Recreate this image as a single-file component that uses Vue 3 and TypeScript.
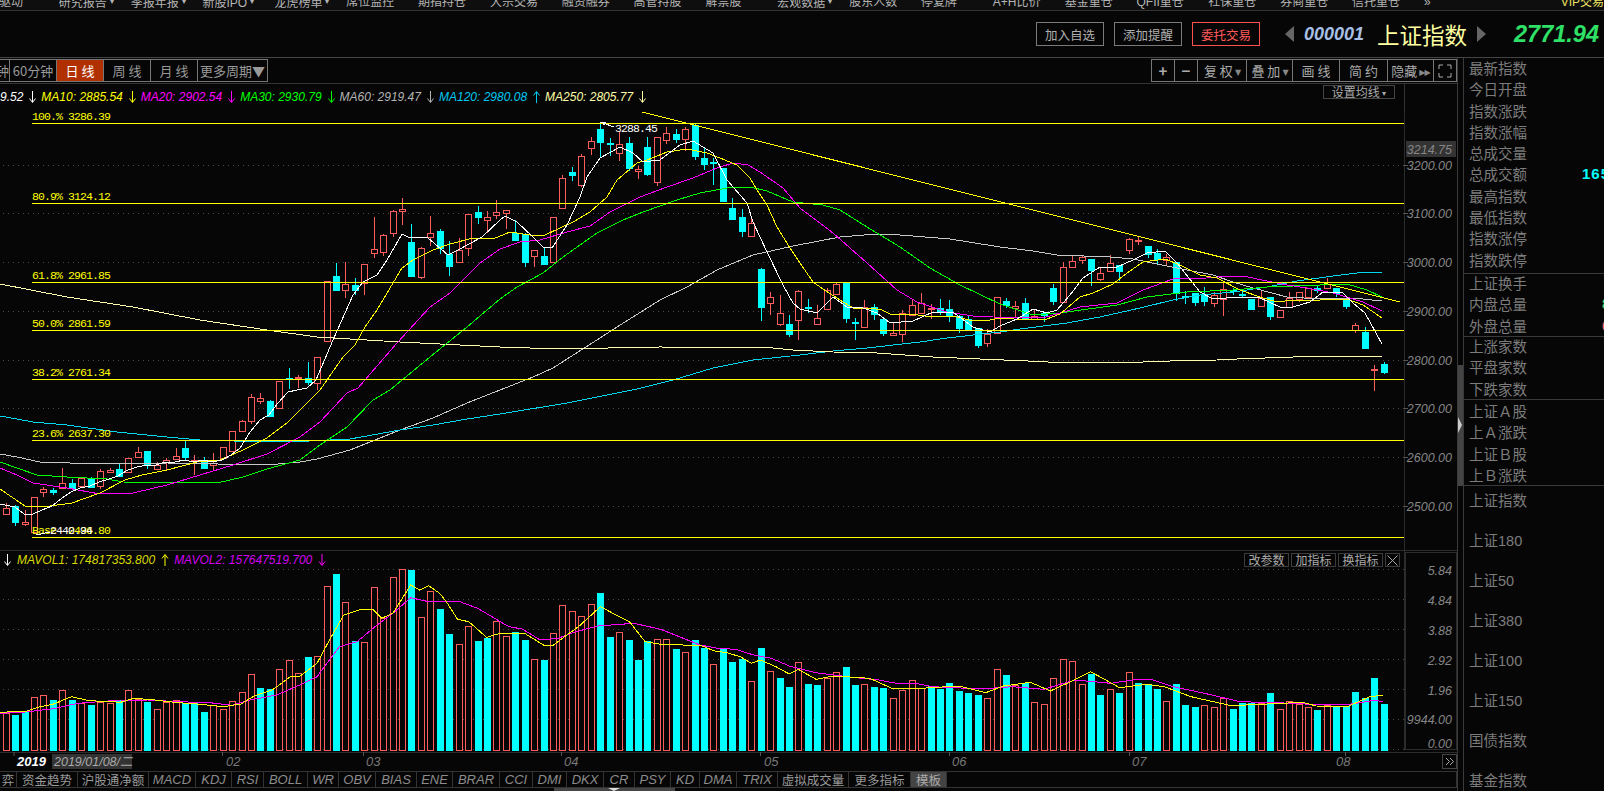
<script setup lang="ts">
type Candle = [number, number, number, number, number]
interface Tab { t: string; w: number; latin?: boolean; on?: boolean }

const menu: { t: string; more?: boolean }[] = [
  { t: '牛驱动' }, { t: '研究报告', more: true }, { t: '季报年报', more: true }, { t: '新股IPO', more: true },
  { t: '龙虎榜单', more: true }, { t: '席位监控' }, { t: '期指持仓' }, { t: '大宗交易' }, { t: '融资融券' },
  { t: '高管持股' }, { t: '解禁股' }, { t: '宏观数据', more: true }, { t: '股东人数' }, { t: '停复牌' },
  { t: 'A+H比价' }, { t: '基金重仓' }, { t: 'QFII重仓' }, { t: '社保重仓' }, { t: '券商重仓' }, { t: '信托重仓' }
]

const periods = [
  { t: '60分钟', cls: 'w46' }, { t: '日 线', cls: 'w46 on' }, { t: '周 线', cls: 'w46' }, { t: '月 线', cls: 'w46' }, { t: '更多周期▼', cls: 'w69' }
]
const tools: { t: string; w: number; caret?: string; bold?: boolean }[] = [
  { t: '+', w: 23, bold: true }, { t: '−', w: 23, bold: true }, { t: '复 权', w: 49, caret: '▼' }, { t: '叠 加', w: 46, caret: '▼' },
  { t: '画 线', w: 47 }, { t: '简 约', w: 48 }, { t: '隐藏', w: 46, caret: '▶▶' }
]
const maItems = [
  { t: '9.52', c: '#ffffff', d: 'down' },
  { t: 'MA10: 2885.54', c: '#ffff00', d: 'down' },
  { t: 'MA20: 2902.54', c: '#ff00ff', d: 'down' },
  { t: 'MA30: 2930.79', c: '#00ff00', d: 'down' },
  { t: 'MA60: 2919.47', c: '#b4b4b4', d: 'down' },
  { t: 'MA120: 2980.08', c: '#00c8f0', d: 'up' },
  { t: 'MA250: 2805.77', c: '#ffffa8', d: 'down' }
]

const candles: Candle[] = [
  [0,508,514,503,515],[1,506,522,505,526],[0,522,524,510,526],[0,497,532,497,532],[0,489,492,487,497],
  [1,490,492,488,495],[0,483,488,468,488],[1,483,488,479,489],[0,478,486,478,486],[1,479,487,477,487],
  [0,471,486,469,489],[0,470,472,468,473],[1,469,476,464,477],[0,458,472,458,472],[0,452,457,447,457],
  [1,451,465,451,469],[0,465,469,462,469],[0,460,462,458,471],[0,456,459,448,460],[1,448,457,441,460],
  [0,460,461,455,475],[1,462,468,457,468],[0,463,465,453,470],[0,447,458,447,460],[0,431,451,431,451],
  [0,421,431,420,432],[0,397,421,394,424],[0,398,401,393,404],[1,401,416,400,417],[0,381,408,381,408],
  [1,378,379,368,389],[0,377,378,375,388],[1,378,382,362,385],[0,357,383,357,390],[0,281,341,281,341],
  [1,276,290,263,291],[0,284,290,262,298],[1,285,290,278,295],[0,264,283,264,295],[0,249,253,217,258],
  [0,235,252,234,256],[0,211,233,210,237],[0,209,211,198,225],[1,242,276,224,276],[0,248,277,247,279],
  [0,233,237,216,246],[1,231,248,229,254],[1,254,266,241,276],[0,250,262,238,262],[0,214,248,214,256],
  [1,212,217,206,224],[0,217,220,211,233],[0,212,215,200,219],
  [0,210,213,210,229],[1,233,240,220,241],[1,234,262,233,267],[0,250,256,250,267],[1,256,264,248,265],
  [0,217,262,217,262],[0,178,208,175,208],[1,172,175,167,181],[0,156,185,154,187],[0,141,148,137,155],
  [1,129,142,122,158],[1,143,144,138,156],[0,144,153,132,161],[1,143,168,137,171],[0,169,171,166,179],
  [1,147,174,137,176],[0,137,182,137,186],[0,133,140,127,144],[1,134,139,129,143],[0,129,139,127,151],
  [1,125,156,124,160],[1,158,164,148,170],[1,162,163,158,185],[1,168,201,168,201],[1,208,219,198,219],
  [1,217,231,209,237],[0,223,236,218,236],[1,269,307,268,321],[0,297,303,292,315],[0,313,324,295,326],
  [1,324,334,315,337],[0,291,320,290,340],[1,307,308,299,313],[0,318,324,305,324],[0,290,309,288,310],
  [0,284,294,283,294],[1,283,318,283,323],[1,322,323,318,340],[0,307,327,300,328],[1,307,314,304,320],
  [1,319,333,317,336],[0,333,335,323,335],[0,313,334,310,342],[0,305,315,300,315],[0,303,313,293,313],
  [0,308,309,304,319],[1,308,311,299,315],[1,309,315,300,322],[1,316,328,315,333],[1,319,329,315,330],
  [1,328,345,328,348],[0,334,343,329,347],[0,297,333,297,333],
  [1,301,305,298,308],[0,306,308,301,317],[1,303,318,298,319],[0,316,319,309,320],[1,313,315,312,322],
  [1,288,301,284,305],[0,267,302,262,302],[0,261,267,256,267],[0,257,260,256,264],[1,259,270,259,286],
  [0,273,279,267,281],[0,263,271,255,271],[1,265,271,265,281],[0,239,250,238,254],[0,240,241,236,245],
  [1,246,254,246,258],[1,253,259,249,265],[0,257,260,254,265],[1,262,293,262,301],[1,296,297,291,304],
  [1,293,302,293,306],[1,295,301,287,306],[0,295,303,292,307],[0,289,299,283,316],[1,290,291,288,295],
  [1,294,295,290,298],[1,299,309,299,309],[0,298,306,290,306],[1,297,316,297,320],[0,310,317,310,318],
  [0,298,307,292,307],[0,292,299,292,302],[0,288,297,288,297],[1,288,290,286,293],[0,284,288,278,288],
  [1,288,293,288,297],[1,300,306,300,309],[0,325,330,323,333],[1,332,348,327,348],[0,369,370,365,391],
  [1,364,372,362,374]
]

const vols = [
  490,-495,-485,442,436,-450,421,-450,460,-465,456,460,-450,421,448,-456,478,456,451,-458,-456,-486,465,478,454,427,373,
  -414,-417,358,330,370,-321,318,109,-72,157,-272,277,112,205,82,58,-60,202,124,-177,-252,283,229,-273,-264,214,259,-246,
  -270,328,-330,250,166,184,199,163,-129,-261,247,-270,-330,-273,268,268,-297,307,-270,
  -293,343,-298,-336,-327,394,-294,364,-384,-411,337,-402,-405,385,367,-351,-405,403,-411,-414,445,420,391,415,-408,-417,
  -399,-423,-429,-435,445,358,-375,405,-400,457,463,385,328,334,402,-372,-435,418,-429,367,-399,-402,-417,454,-402,-465,
  -471,466,472,445,-477,-459,-460,460,-429,478,453,462,470,-480,466,-470,-468,-426,-444,-384,-462
]

const step = 9.437
const cx = (i: number): number => Math.round(5.7 + step * i)

const wickPath = (color: number): string =>
  candles
    .map((c, i) => ({ c, x: cx(i) + 0.5 }))
    .filter(({ c }) => c[0] === color)
    .map(({ c, x }) => `M${x} ${c[3]}V${c[1]}M${x} ${c[2]}V${c[4]}`)
    .join('')

const redWicks = wickPath(0)
const cyanWicks = wickPath(1)
const bodies = candles.map((c, i) => ({
  x: cx(i) - 3,
  y: c[1],
  h: Math.max(c[2] - c[1], 1),
  red: c[0] === 0,
  key: i
}))
const volBars = vols.map((v, i) => {
  const top = Math.round(550 + Math.abs(v) / 3)
  return { x: cx(i) - 3, y: top, h: 750 - top, red: v > 0, key: i }
})

const ma5 = '0,504 15,507 24,514 33,514 42,510 52,506 62,498 71,492 80,488 90,486 99,482 109,479 118,476 128,470 137,467 147,465 156,465 165,462 175,462 184,460 194,462 203,460 212,462 222,460 231,455 240,448 250,432 260,420 269,415 278,403 288,392 297,390 307,388 316,380 333,340 353,295 363,282 377,275 387,260 402,234 408,237 427,237 448,255 458,250 482,237 500,220 505,216 517,222 533,237 543,247 552,248 567,225 580,197 587,177 600,158 620,147 633,153 643,162 660,160 680,145 693,141 713,153 727,180 747,203 753,222 767,252 783,285 793,303 800,309 817,313 833,297 847,307 863,308 877,313 890,323 913,321 933,312 953,312 973,327 990,332 1000,326 1017,319 1033,309 1047,313 1057,310 1070,295 1083,278 1100,267 1117,267 1133,260 1147,253 1165,251 1177,263 1200,292 1213,299 1240,297 1260,298 1280,307 1293,307 1310,302 1323,292 1343,293 1353,303 1365,313 1382,344'
const ma10 = '0,489 25,506 43,507 72,503 100,493 125,480 142,475 167,470 197,462 220,460 243,450 267,438 287,423 307,403 320,390 343,357 355,345 365,327 377,310 393,283 402,268 413,260 433,250 450,244 473,238 493,239 510,232 530,235 545,235 560,228 573,222 590,212 607,197 617,180 637,163 647,160 667,152 687,149 707,153 720,158 737,165 750,178 757,190 767,205 777,227 790,248 800,263 813,282 823,289 840,300 853,308 870,308 882,310 890,314 910,314 933,317 953,316 973,321 990,320 1000,318 1027,320 1047,319 1060,314 1080,297 1093,293 1113,284 1127,273 1143,262 1165,259 1180,265 1200,275 1217,278 1240,290 1260,297 1277,302 1293,300 1320,300 1347,299 1363,305 1382,318'
const ma20 = '0,468 17,475 33,483 67,488 100,494 133,493 167,485 200,475 233,465 267,454 300,437 320,422 347,393 358,388 397,343 430,307 450,293 480,263 500,249 520,242 540,240 567,232 590,226 610,212 640,197 667,187 693,178 717,168 733,163 748,165 760,172 783,188 800,208 833,233 867,263 897,290 917,302 947,312 973,316 993,317 1043,318 1060,313 1080,307 1117,303 1143,290 1173,279 1207,278 1230,276 1243,276 1267,281 1287,285 1307,288 1333,293 1363,302 1382,311'
const ma30 = '0,462 17,468 37,475 67,477 107,479 123,482 217,483 243,477 267,469 300,460 320,445 347,427 373,400 390,390 430,357 467,327 500,299 517,287 543,273 563,257 597,233 623,220 643,212 677,200 700,193 727,188 750,187 767,191 793,202 823,205 840,210 867,227 900,247 930,268 960,285 1000,304 1033,315 1060,313 1117,305 1147,297 1187,292 1233,290 1267,287 1347,284 1367,290 1382,297'
const ma60 = '0,454 17,457 40,462 100,464 167,463 267,465 300,462 317,459 350,450 400,430 433,418 467,403 500,390 533,377 553,368 600,338 617,327 660,300 687,287 717,270 753,255 793,246 840,237 877,234 900,235 950,239 1000,247 1033,251 1057,255 1110,257 1133,259 1157,264 1187,270 1213,275 1233,282 1253,288 1287,297 1320,299 1353,298 1382,301'
const ma120 = '0,416 33,422 67,425 117,432 167,437 200,440 267,442 310,441 350,439 400,430 433,425 467,419 500,414 567,403 637,389 673,380 713,368 753,360 800,355 833,351 867,348 920,342 947,338 1000,332 1020,329 1067,323 1100,317 1140,308 1173,300 1200,295 1233,292 1267,287 1297,281 1333,276 1357,273 1382,272'
const ma250 = '0,284 67,297 133,307 200,320 267,330 317,337 400,342 500,347 530,348 557,349 660,347 773,348 793,350 833,352 877,353 933,357 980,359 1028,361 1048,362 1143,362 1170,361 1217,360 1237,359 1293,357 1320,356 1367,356 1382,357'

const v1z10: number[][] = [[0,488],[30,484],[55,485],[90,470],[120,462],[160,440],[200,452],[250,455],[270,457],[300,445],[340,449],[400,458],[450,463],[500,470],[540,462],[570,437],[610,420],[650,380],[670,380],[710,340],[740,265],[770,195],[810,178],[835,178],[855,205],[880,190],[920,105],[940,120],[960,107],[985,130],[1000,155],[1025,208],[1050,215],[1090,262],[1120,250],[1175,250],[1220,287],[1240,285],[1270,255],[1300,225],[1345,170],[1380,195],[1410,215],[1445,275],[1480,283],[1530,285],[1568,285]]
const v1z11: number[][] = [[30,302],[60,308],[90,320],[115,340],[135,330],[170,350],[200,372],[220,358],[260,388],[300,378],[380,385],[430,415],[480,416],[580,408],[640,428],[680,408],[740,397],[785,423],[830,395],[875,365],[940,413],[1000,403],[1040,410],[1100,440],[1190,467],[1350,457],[1380,468],[1450,470],[1500,440],[1530,436]]
const v2z10: number[][] = [[0,490],[50,487],[120,476],[175,460],[270,450],[330,450],[400,455],[470,458],[520,466],[560,450],[620,435],[680,400],[710,380],[760,290],[800,275],[840,230],[880,190],[920,143],[960,155],[1030,155],[1070,175],[1140,230],[1170,237],[1210,270],[1250,265],[1290,245],[1340,228],[1420,220],[1480,238],[1568,285]]
const v2z11: number[][] = [[40,295],[80,298],[120,315],[160,325],[200,348],[260,368],[340,382],[400,390],[440,400],[490,402],[520,410],[600,415],[650,415],[700,410],[770,418],[840,390],[920,400],[980,388],[1010,388],[1060,410],[1130,430],[1210,455],[1330,460],[1380,464],[1450,464],[1510,451],[1530,455]]
const volLine = (a: number[][], b: number[][]): string => {
  const k = 700 / 1568
  const p1 = a.map(([x, y]) => `${(x * k).toFixed(1)},${(550 + y / 3).toFixed(1)}`)
  const p2 = b.map(([x, y]) => `${(700 + x * k).toFixed(1)},${(550 + y / 3).toFixed(1)}`)
  return [...p1, ...p2].join(' ')
}
const mavol1 = volLine(v1z10, v1z11)
const mavol2 = volLine(v2z10, v2z11)

const fibs = [
  { y: 123, t: '100.% 3286.39' }, { y: 203, t: '80.9% 3124.12' }, { y: 282, t: '61.8% 2961.85' },
  { y: 330, t: '50.0% 2861.59' }, { y: 379, t: '38.2% 2761.34' }, { y: 440, t: '23.6% 2637.30' },
  { y: 537, t: 'Base  2436.80' }
]
const grid = [165, 213, 262, 311, 360, 408, 457, 506]
const axis = ['3200.00', '3100.00', '3000.00', '2900.00', '2800.00', '2700.00', '2600.00', '2500.00']
const vgrid = [569, 599, 629, 659, 689, 719, 749]
const vaxis = [
  { y: 575, t: '5.84' }, { y: 605, t: '4.84' }, { y: 635, t: '3.88' }, { y: 665, t: '2.92' },
  { y: 695, t: '1.96' }, { y: 724, t: '9944.00' }, { y: 748, t: '0.00' }
]
const months = [
  { x: 226, tick: 222, t: '02' }, { x: 366, tick: 363, t: '03' }, { x: 564, tick: 561, t: '04' },
  { x: 764, tick: 760, t: '05' }, { x: 952, tick: 949, t: '06' }, { x: 1132, tick: 1129, t: '07' },
  { x: 1336, tick: 1345, t: '08' }
]

const tabs: Tab[] = [
  { t: '弈', w: 17 }, { t: '资金趋势', w: 61 }, { t: '沪股通净额', w: 71 }, { t: 'MACD', w: 47, latin: true },
  { t: 'KDJ', w: 36, latin: true }, { t: 'RSI', w: 32, latin: true }, { t: 'BOLL', w: 44, latin: true }, { t: 'WR', w: 31, latin: true },
  { t: 'OBV', w: 37, latin: true }, { t: 'BIAS', w: 41, latin: true }, { t: 'ENE', w: 36, latin: true }, { t: 'BRAR', w: 47, latin: true },
  { t: 'CCI', w: 33, latin: true }, { t: 'DMI', w: 34, latin: true }, { t: 'DKX', w: 37, latin: true }, { t: 'CR', w: 31, latin: true },
  { t: 'PSY', w: 36, latin: true }, { t: 'KD', w: 29, latin: true }, { t: 'DMA', w: 37, latin: true }, { t: 'TRIX', w: 41, latin: true },
  { t: '虚拟成交量', w: 71 }, { t: '更多指标', w: 62 }, { t: '模板', w: 36, on: true }
]

const quote = [
  { rows: ['最新指数', '今日开盘', '指数涨跌', '指数涨幅', '总成交量', '总成交额', '最高指数', '最低指数', '指数涨停', '指数跌停'], cls: 'b1' },
  { rows: ['上证换手', '内盘总量', '外盘总量'], cls: 'b2' },
  { rows: ['上涨家数', '平盘家数', '下跌家数'], cls: 'b2' },
  { rows: ['上证Ａ股', '上Ａ涨跌', '上证Ｂ股', '上Ｂ涨跌'], cls: 'b3' }
]
const quoteValue: Record<string, { t: string; cls: string }> = {
  总成交额: { t: '165', cls: 'val-cyan' },
  内盘总量: { t: '8', cls: 'val-green' },
  外盘总量: { t: '6', cls: 'val-red' }
}
const indices = ['上证指数', '上证180', '上证50', '上证380', '上证100', '上证150', '国债指数', '基金指数']
</script>

<template>
  <div class="app">
    <nav class="menu">
      <span v-for="m in menu" :key="m.t" class="menu-item">{{ m.t }}<i v-if="m.more" class="caret">▾</i></span>
      <span class="menu-item more">»</span>
      <span class="vip">VIP交易</span>
    </nav>

    <header class="head">
      <button class="btn">加入自选</button>
      <button class="btn">添加提醒</button>
      <button class="btn red">委托交易</button>
      <span class="tri prev"></span>
      <span class="code">000001</span>
      <span class="name">上证指数</span>
      <span class="tri next-stock"></span>
      <span class="price">2771.94</span>
    </header>

    <div class="body">
      <main class="main">
        <div class="tools">
          <div class="periods">
            <span class="period w10">钟</span>
            <span v-for="p in periods" :key="p.t" class="period" :class="p.cls">{{ p.t }}</span>
          </div>
          <div class="toolset">
            <span v-for="t in tools" :key="t.t" class="tool" :class="{ bold: t.bold }" :style="{ width: t.w + 'px' }">{{ t.t }}<i v-if="t.caret" class="tool-caret">{{ t.caret }}</i></span>
            <span class="tool last">
              <svg width="14" height="14" viewBox="0 0 14 14" fill="none" stroke="#aaa">
                <path d="M1 5V1h4M9 1h4v4M13 9v4H9M5 13H1V9" />
              </svg>
            </span>
          </div>
        </div>

        <div class="ma-row">
          <span v-for="m in maItems" :key="m.t" class="ma" :style="{ color: m.c }">
            {{ m.t }}
            <svg class="arrow" width="18" height="12" viewBox="0 0 18 12" fill="none" stroke="currentColor">
              <path v-if="m.d === 'down'" d="M9.5 0V11M6.5 7.5L9.5 11.5L12.5 7.5" />
              <path v-else d="M9.5 1V12M6.5 4.5L9.5 0.5L12.5 4.5" />
            </svg>
          </span>
          <span class="set-ma">设置均线 <i>▾</i></span>
        </div>

        <div class="chart-wrap">
          <svg class="chart" width="1457" height="661" viewBox="0 110 1457 661">
            <!-- frame -->
            <path class="frame" d="M1404.5 110V750M0 550.5H1457M0 752.5H1457" />
            <rect class="vframe" x="1405.5" y="552.5" width="51" height="197" />
            <!-- grids -->
            <g class="dots">
              <path v-for="y in grid" :key="y" :d="`M3 ${y + 0.5}H1404`" />
              <path v-for="y in vgrid" :key="y" :d="`M3 ${y + 0.5}H1404`" />
            </g>
            <path v-for="y in grid" :key="'t' + y" class="tick" :d="`M1404 ${y + 0.5}H1408`" />

            <!-- volume -->
            <g v-for="b in volBars" :key="b.key">
              <rect v-if="b.red" class="red-box" :x="b.x + 0.5" :y="b.y + 0.5" width="6" :height="b.h" />
              <rect v-else class="cyan-box" :x="b.x" :y="b.y" width="7" :height="b.h + 1" />
            </g>
            <polyline class="ln" stroke="#ff00ff" :points="mavol2" />
            <polyline class="ln" stroke="#ffff00" :points="mavol1" />

            <!-- candles -->
            <path class="wick" stroke="#ff5c5c" :d="redWicks" />
            <path class="wick" stroke="#00ffff" :d="cyanWicks" />
            <g v-for="b in bodies" :key="'c' + b.key">
              <rect v-if="b.red" class="red-box" :x="b.x + 0.5" :y="b.y + 0.5" width="6" :height="b.h" />
              <rect v-else class="cyan-box" :x="b.x" :y="b.y" width="7" :height="b.h + 1" />
            </g>

            <!-- averages -->
            <polyline class="ln" stroke="#c8c8c8" :points="ma60" />
            <polyline class="ln" stroke="#00d8f0" :points="ma120" />
            <polyline class="ln" stroke="#ffffb0" :points="ma250" />
            <polyline class="ln" stroke="#00ff00" :points="ma30" />
            <polyline class="ln" stroke="#ff00ff" :points="ma20" />
            <polyline class="ln" stroke="#ffff00" :points="ma10" />
            <polyline class="ln" stroke="#ffffff" :points="ma5" />

            <!-- drawings -->
            <g v-for="f in fibs" :key="f.y">
              <path class="ln" stroke="#ffff00" :d="`M32 ${f.y + 0.5}H1404`" />
              <text class="fib" x="32" :y="f.y - 3" xml:space="preserve">{{ f.t }}</text>
            </g>
            <path class="ln" stroke="#ffff00" d="M642 112L1400 302" />

            <path class="ln" stroke="#ffffff" d="M600 122L606 123L603 125M600 122L614 127" />
            <text class="ext" x="615" y="132">3288.45</text>
            <path class="ln" stroke="#ffffff" d="M36 535L50 532" />
            <text class="ext" x="50" y="534">2440.94</text>

            <!-- axis -->
            <rect class="last-box" x="1406" y="141" width="50" height="16" />
            <text class="ax" x="1452" y="154">3214.75</text>
            <text v-for="(t, i) in axis" :key="t" class="ax" x="1452" :y="grid[i] + 5">{{ t }}</text>
            <text v-for="v in vaxis" :key="v.t" class="ax" x="1452" :y="v.y">{{ v.t }}</text>

            <!-- time axis -->
            <path class="tick" d="M14 752V756" />
            <path v-for="m in months" :key="'m' + m.t" class="tick" :d="`M${m.tick + 0.5} 752V756`" />
            <text class="year" x="17" y="766">2019</text>
            <rect class="date-box" x="52" y="754" width="80" height="15" />
            <text class="date" x="54" y="766">2019/01/08/二</text>
            <text v-for="m in months" :key="m.t" class="mon" :x="m.x" y="766">{{ m.t }}</text>
            <rect class="next" x="1442.5" y="754.5" width="14" height="14" />
            <path class="next-icon" d="M1446 758l3.500 3.500l-3.500 3.500M1450 758l3.500 3.500l-3.500 3.500" />
          </svg>

          <div class="vol-legend">
            <svg class="arrow" width="14" height="12" viewBox="0 0 14 12" fill="none" stroke="#fff"><path d="M7.500 0V11M4.500 7.500L7.500 11.500L10.500 7.500" /></svg>
            <span class="ma yel">MAVOL1: 174817353.800
              <svg class="arrow" width="19" height="12" viewBox="0 0 18 12" fill="none" stroke="#ffff00"><path d="M9.500 1V12M6.500 4.500L9.500 .5L12.500 4.500" /></svg>
            </span>
            <span class="ma mag">MAVOL2: 157647519.700
              <svg class="arrow" width="19" height="12" viewBox="0 0 18 12" fill="none" stroke="#ff00ff"><path d="M9.500 0V11M6.500 7.500L9.500 11.500L12.500 7.500" /></svg>
            </span>
          </div>
          <div class="vol-tools">
            <span class="vbtn">改参数</span>
            <span class="vbtn">加指标</span>
            <span class="vbtn">换指标</span>
            <span class="vbtn x">
              <svg width="11" height="11" viewBox="0 0 11 11" stroke="#aaa" fill="none"><path d="M0.500 0.500L10.500 10.500M10.500 0.500L0.500 10.500" /></svg>
            </span>
          </div>
        </div>

        <div class="tabs">
          <span v-for="t in tabs" :key="t.t" class="tab" :class="{ latin: t.latin, on: t.on }" :style="{ width: t.w + 'px' }">{{ t.t }}</span>
        </div>
        <div class="hscroll"><span class="thumb"></span></div>
      </main>

      <div class="strip"><span class="strip-thumb"></span></div>

      <aside class="panel">
        <section v-for="b in quote" :key="b.rows[0]" class="block" :class="b.cls">
          <div v-for="r in b.rows" :key="r" class="row">
            <span class="lbl">{{ r }}</span>
            <span v-if="quoteValue[r]" class="val" :class="quoteValue[r].cls">{{ quoteValue[r].t }}</span>
          </div>
        </section>
        <section class="indices">
          <div v-for="r in indices" :key="r" class="idx">{{ r }}</div>
        </section>
      </aside>
    </div>
  </div>
</template>

<style>
html, body { margin: 0; background: #060606; overflow: hidden; }
</style>

<style scoped>
.app {
  width: 1604px;
  height: 791px;
  display: flex;
  flex-direction: column;
  overflow: hidden;
  background: #060606;
  color: #999;
  font-family: "Liberation Sans", "Noto Sans CJK SC", sans-serif;
  font-size: 13px;
}

/* top menu */
.menu {
  flex: none;
  position: relative;
  height: 10px;
  display: flex;
  overflow: hidden;
  background: #0e0e0e;
  border-bottom: 1px solid #333;
}
.menu-item {
  flex: none;
  width: 71.85px;
  height: 16px;
  line-height: 16px;
  margin-top: -6.5px;
  font-size: 12px;
  color: #b4b4b4;
  white-space: nowrap;
  transform: translateX(-13px);
}
.caret { font-style: normal; font-size: 8px; margin-left: 3px; vertical-align: 3px; }
.vip {
  position: absolute;
  right: 0;
  top: -6.5px;
  font-size: 12px;
  line-height: 16px;
  color: #e8e060;
}

/* head */
.head {
  flex: none;
  height: 46px;
  display: flex;
  align-items: center;
  justify-content: flex-end;
  padding-right: 5px;
  border-bottom: 1px solid #444;
}
.btn {
  flex: none;
  width: 68px;
  height: 24px;
  margin: 0 10px 0 0;
  padding: 0;
  box-sizing: border-box;
  background: transparent;
  border: 1px solid #7a7a7a;
  color: #b0b0b0;
  font: 12.5px "Noto Sans CJK SC", sans-serif;
}
.btn.red { margin-right: 25px; border-color: #ff5050; color: #ff5a5a; }
.tri { flex: none; width: 0; height: 0; border-style: solid; border-color: transparent; }
.tri.prev { border-width: 8px 9px 8px 0; border-right-color: #666; margin-right: 10px; }
.tri.next-stock { border-width: 8px 0 8px 9px; border-left-color: #666; margin: 0 28px 0 10px; }
.code { flex: none; font-weight: 700; font-style: italic; font-size: 18px; color: #a8c0e8; margin-right: 13px; }
.name { flex: none; font: 22.5px "Noto Sans CJK SC", sans-serif; color: #ffffa0; }
.price { flex: none; font-weight: 700; font-style: italic; font-size: 23.5px; color: #2ee066; }

/* body */
.body { flex: 1; display: flex; min-height: 0; }
.main { flex: none; width: 1457px; display: flex; flex-direction: column; }

.tools {
  flex: none;
  height: 26px;
  box-sizing: border-box;
  display: flex;
  justify-content: space-between;
  align-items: flex-start;
  padding-top: 1px;
  border-bottom: 1px solid #333;
}
.periods, .toolset { display: flex; height: 23px; box-sizing: border-box; border: 1px solid #777; border-left: 0; }
.period {
  box-sizing: border-box;
  text-align: center;
  line-height: 21px;
  font-size: 13px;
  color: #999;
  border-right: 1px solid #777;
  white-space: nowrap;
  font-family: "Noto Sans CJK SC", sans-serif;
}
.period.w10 { width: 10px; text-indent: -4px; overflow: hidden; }
.period.w46 { width: 47px; }
.period.w69 { width: 69px; border-right: 0; }
.period.on { background: #b03000; color: #fff; }
.toolset { border-left: 1px solid #777; }
.tool {
  box-sizing: border-box;
  height: 21px;
  line-height: 21px;
  text-align: center;
  font-size: 13px;
  color: #aaa;
  border-right: 1px solid #777;
  white-space: nowrap;
  font-family: "Noto Sans CJK SC", sans-serif;
}
.tool.bold { font-weight: 700; font-size: 15px; }
.tool-caret { font-style: normal; font-size: 8px; letter-spacing: -1px; color: #888; margin-left: 2px; vertical-align: 1px; font-family: "DejaVu Sans", sans-serif; }
.tool.last { width: 22px; border-right: 0; display: flex; align-items: center; justify-content: center; }

.ma-row {
  flex: none;
  width: 1405px;
  height: 26px;
  box-sizing: border-box;
  display: flex;
  align-items: center;
  padding: 0 9px 0 0;
  border-right: 1px solid #333;
}
.ma {
  display: inline-flex;
  align-items: center;
  font-style: italic;
  font-size: 12px;
  white-space: nowrap;
}
.arrow { flex: none; }
.set-ma {
  margin-left: auto;
  width: 72px;
  height: 14px;
  margin-top: -10px;
  box-sizing: border-box;
  border: 1px solid #444;
  font: 12px/12px "Noto Sans CJK SC", sans-serif;
  color: #aaa;
  text-align: center;
}
.set-ma i { font-style: normal; font-size: 8px; vertical-align: 1px; }

.chart-wrap { flex: none; position: relative; width: 1457px; height: 661px; }
.chart { display: block; }
.frame { fill: none; stroke: #2c2c2c; }
.vframe { fill: none; stroke: #2c2c2c; }
.dots path { fill: none; stroke: #4a4a4a; stroke-dasharray: 1 4; }
.tick { fill: none; stroke: #555; }
.red-box { fill: #060606; stroke: #ff5c5c; shape-rendering: crispEdges; }
.cyan-box { fill: #00ffff; shape-rendering: crispEdges; }
.wick { fill: none; shape-rendering: crispEdges; }
.ln { fill: none; stroke-width: 1; shape-rendering: crispEdges; }
.fib {
  font-family: "Liberation Mono", monospace;
  font-size: 11.5px;
  letter-spacing: -0.9px;
  fill: #ffff00;
  white-space: pre;
}
.ext {
  font-family: "Liberation Mono", monospace;
  font-size: 11.5px;
  letter-spacing: -0.9px;
  fill: #fff;
}
.last-box { fill: #333; }
.ax { font-style: italic; font-size: 12.5px; fill: #858585; text-anchor: end; }
.year { font-style: italic; font-weight: 700; font-size: 13px; fill: #fff; }
.date-box { fill: #333; }
.date { font-style: italic; font-size: 12.5px; fill: #aaa; font-family: "Liberation Sans", "Noto Sans CJK SC", sans-serif; }
.mon { font-style: italic; font-size: 13px; fill: #777; }
.next { fill: none; stroke: #444; }
.next-icon { fill: none; stroke: #aaa; }

.vol-legend {
  position: absolute;
  left: 0;
  top: 443px;
  height: 14px;
  display: flex;
  align-items: center;
}
.vol-legend > .arrow { margin-right: 3px; }
.yel { color: #d8d800; }
.mag { color: #d000f0; }
.vol-tools {
  position: absolute;
  top: 443px;
  right: 57px;
  display: flex;
  gap: 2px;
}
.vbtn {
  width: 45px;
  height: 14px;
  box-sizing: border-box;
  border: 1px solid #3c3c3c;
  font: 12px/12px "Noto Sans CJK SC", sans-serif;
  color: #aaa;
  text-align: center;
}
.vbtn.x { width: 15px; display: flex; align-items: center; justify-content: center; }

.tabs {
  flex: none;
  height: 17px;
  display: flex;
  box-sizing: border-box;
  border: 1px solid #333;
  border-left: 0;
}
.tab {
  flex: none;
  box-sizing: border-box;
  height: 15px;
  text-align: center;
  font: 12.5px/15px "Noto Sans CJK SC", sans-serif;
  color: #999;
  border-right: 1px solid #333;
  white-space: nowrap;
  overflow: hidden;
}
.tab.latin { font: italic 13px/15px "Liberation Sans", sans-serif; color: #8c8c8c; }
.tab.on { background: #444; color: #aaa; }
.hscroll { flex: 1; position: relative; }
.thumb {
  position: absolute;
  left: 554px;
  top: 0;
  width: 121px;
  height: 3px;
  background: #444;
}
.thumb::after {
  content: "";
  position: absolute;
  left: 54px;
  top: 0;
  border-style: solid;
  border-width: 3px 6px 0;
  border-color: #ddd transparent transparent;
}

/* scrollbar strip */
.strip {
  flex: none;
  width: 7px;
  position: relative;
  box-sizing: border-box;
  border-left: 1px solid #3a3a3a;
  border-right: 1px solid #3a3a3a;
}
.strip-thumb {
  position: absolute;
  left: 0;
  width: 5px;
  top: 307px;
  height: 121px;
  background: #444;
}
.strip-thumb::after {
  content: "";
  position: absolute;
  left: 0;
  top: 52px;
  border-style: solid;
  border-width: 8px 0 8px 4px;
  border-color: transparent transparent transparent #ccc;
}

/* right panel */
.panel {
  flex: 1;
  min-width: 0;
  overflow: hidden;
  font: 14.5px "Noto Sans CJK SC", sans-serif;
  color: #7c7c7c;
}
.block { box-sizing: border-box; border-bottom: 1px solid #3a3a3a; }
.b1 { height: 216px; }
.b2 { height: 64px; margin-top: -1px; }
.b3 { height: 86px; }
.row {
  display: grid;
  grid-template-columns: 113px auto;
  height: 21.3px;
  line-height: 19px;
  padding-left: 5px;
  white-space: nowrap;
}
.b3 .row { line-height: 21px; }
.val { font-family: "Liberation Sans", sans-serif; font-weight: 700; font-size: 15px; letter-spacing: 1px; }
.val-cyan { color: #00ffff; }
.val-green { color: #40d060; margin-left: 20px; }
.val-red { color: #ff5c5c; margin-left: 20px; }
.indices { padding-left: 5px; }
.idx { height: 40px; line-height: 31px; white-space: nowrap; font-family: "Liberation Sans", "Noto Sans CJK SC", sans-serif; }
</style>
